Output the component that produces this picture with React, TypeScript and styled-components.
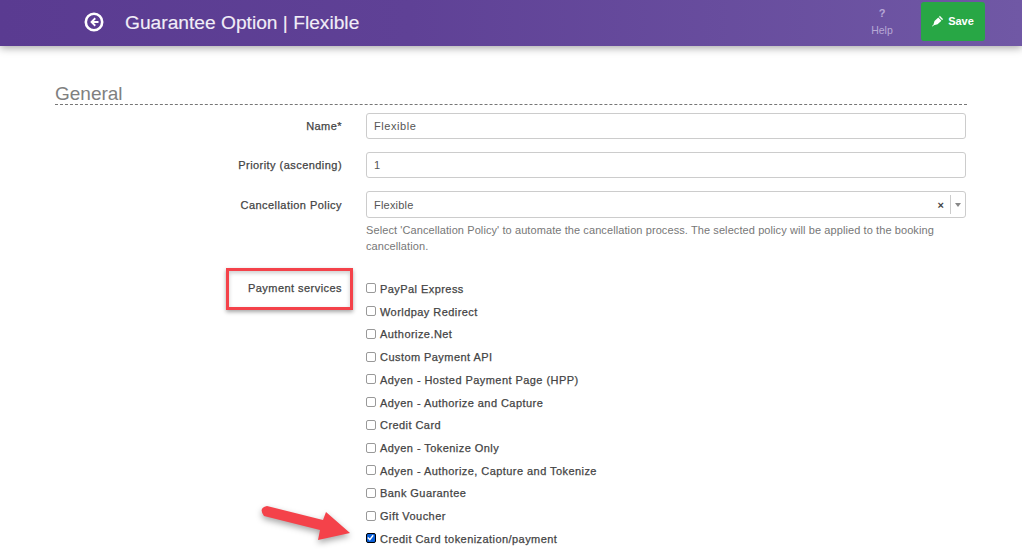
import React from "react";
import styled, { createGlobalStyle } from "styled-components";

const Global = createGlobalStyle`
  html, body { margin: 0; padding: 0; height: 559px; overflow: hidden; background: #fff; }
  body { font-family: "Liberation Sans", Arial, sans-serif; color: #333; }
  * { box-sizing: border-box; }
`;

const Page = styled.div`
  position: relative;
  width: 1022px;
  height: 559px;
  overflow: hidden;
`;

const Header = styled.header`
  height: 46px;
  display: flex;
  align-items: flex-start;
  padding-left: 84px;
  background: linear-gradient(90deg, #5a3b91 0%, #5f4196 40%, #7058a5 100%);
  box-shadow: 0 2px 8px rgba(0, 0, 0, 0.35);
`;

const BackIcon = styled.svg`
  width: 20px;
  height: 20px;
  margin-top: 12px;
  flex: none;
`;

const Title = styled.h1`
  margin: 11px 0 0 21px;
  font-size: 19.2px;
  line-height: 23px;
  font-weight: 400;
  color: #f1edf7;
  -webkit-text-stroke: 0.15px #f1edf7;
  flex: 1;
`;

const HelpBox = styled.div`
  width: 36px;
  margin: 7px 21px 0 0;
  display: flex;
  flex-direction: column;
  align-items: center;
  color: #b7a8d6;
`;

const HelpMark = styled.span`
  font-size: 11px;
  line-height: 13px;
  font-weight: 700;
`;

const HelpText = styled.span`
  font-size: 10.5px;
  line-height: 13px;
  margin-top: 4px;
`;

const SaveButton = styled.button`
  width: 64px;
  height: 39px;
  margin: 2px 37px 0 0;
  border: 0;
  border-radius: 3px;
  background: #28a745;
  color: #fff;
  font: 700 11px "Liberation Sans", Arial, sans-serif;
  display: flex;
  align-items: center;
  justify-content: center;
  gap: 4px;
  padding: 0 0 1px;
`;

const Content = styled.main`
  padding: 36px 55px 0;
`;

const SectionTitle = styled.h2`
  margin: 0 0 8px;
  height: 23px;
  font-size: 19px;
  line-height: 23px;
  font-weight: 400;
  color: #808080;
  border-bottom: 1px dashed #777;
`;

const Row = styled.div<{ $gap?: number }>`
  display: grid;
  grid-template-columns: 287px 600px;
  column-gap: 24px;
  margin-bottom: ${(p) => p.$gap ?? 13}px;
`;

const Label = styled.label<{ $top?: number }>`
  padding-top: ${(p) => p.$top ?? 7}px;
  text-align: right;
  font-size: 11px;
  line-height: 13px;
  font-weight: 400;
  letter-spacing: 0.45px;
  -webkit-text-stroke: 0.25px #444;
  color: #444;
`;

const Input = styled.input`
  width: 600px;
  height: 26px;
  padding: 0 7px;
  border: 1px solid #ccc;
  border-radius: 3px;
  font: 400 11px "Liberation Sans", Arial, sans-serif;
  letter-spacing: 0.55px;
  color: #555;
  background: #fff;
  outline: none;
`;

const SelectBox = styled.div`
  width: 600px;
  height: 27px;
  padding: 0 0 0 7px;
  border: 1px solid #ccc;
  border-radius: 3px;
  display: flex;
  align-items: center;
  font-size: 11px;
  letter-spacing: 0.2px;
  color: #555;
`;

const SelectValue = styled.span`
  flex: 1;
`;

const ClearMark = styled.span`
  font-size: 11px;
  font-weight: 700;
  color: #444;
  margin-right: 6px;
`;

const SelectDivider = styled.span`
  width: 1px;
  height: 19px;
  background: #ccc;
`;

const Caret = styled.span`
  width: 14px;
  display: flex;
  justify-content: center;
  &::after {
    content: "";
    border-left: 3px solid transparent;
    border-right: 3px solid transparent;
    border-top: 4px solid #888;
  }
`;

const Help = styled.p`
  margin: 4px 0 0;
  font-size: 11px;
  line-height: 16px;
  letter-spacing: 0.09px;
  color: #777;
`;

const Options = styled.div`
  margin-top: -2.4px;
  display: flex;
  flex-direction: column;
`;

const Option = styled.label`
  height: 22.72px;
  display: flex;
  align-items: center;
  gap: 4px;
  font-size: 11px;
  letter-spacing: 0.44px;
  -webkit-text-stroke: 0.25px #444;
  color: #444;
`;

const Check = styled.span<{ $on?: boolean }>`
  width: 10px;
  height: 10px;
  margin-top: -1px;
  flex: none;
  display: flex;
  border-radius: 2px;
  border: ${(p) => (p.$on ? "1.5px solid #000" : "1px solid #999")};
  background: ${(p) => (p.$on ? "#0b5fd8" : "#fff")};
`;

const RedBox = styled.div`
  position: absolute;
  left: 226px;
  top: 268px;
  width: 127px;
  height: 42px;
  border: 3px solid #f4424a;
  box-shadow: 0 2px 4px rgba(0, 0, 0, 0.35), inset 0 2px 4px rgba(0, 0, 0, 0.2);
`;

const Arrow = styled.svg`
  position: absolute;
  left: 258px;
  top: 500px;
  width: 100px;
  height: 50px;
  overflow: visible;
  filter: drop-shadow(0 3px 3px rgba(0, 0, 0, 0.35));
`;

const options = [
  "PayPal Express",
  "Worldpay Redirect",
  "Authorize.Net",
  "Custom Payment API",
  "Adyen - Hosted Payment Page (HPP)",
  "Adyen - Authorize and Capture",
  "Credit Card",
  "Adyen - Tokenize Only",
  "Adyen - Authorize, Capture and Tokenize",
  "Bank Guarantee",
  "Gift Voucher",
  "Credit Card tokenization/payment",
];

export default function App() {
  return (
    <Page>
      <Global />
      <Header>
        <BackIcon viewBox="0 0 20 20" aria-hidden="true">
          <circle cx="10" cy="10" r="8.2" fill="none" stroke="#fff" strokeWidth="2.6" />
          <path d="M10.6 5.6 6.2 10l4.4 4.4 1.3-1.3-2-2.1h4.6V9H9.9l2-2.1z" fill="#fff" />
        </BackIcon>
        <Title>Guarantee Option | Flexible</Title>
        <HelpBox>
          <HelpMark>?</HelpMark>
          <HelpText>Help</HelpText>
        </HelpBox>
        <SaveButton>
          <svg width="12" height="12" viewBox="0 0 12 12" aria-hidden="true">
            <path d="M7.8.8 11.2 4.2 10 5 7 2zM6.3 2.6 9.4 5.7 5.6 9.2 1.9 10.2.6 11.6 0 11l1.4-1.3L2.5 6z" fill="#fff" />
          </svg>
          Save
        </SaveButton>
      </Header>
      <Content>
        <SectionTitle>General</SectionTitle>
        <Row>
          <Label>Name*</Label>
          <Input defaultValue="Flexible" readOnly />
        </Row>
        <Row>
          <Label>Priority (ascending)</Label>
          <Input defaultValue="1" readOnly />
        </Row>
        <Row $gap={26}>
          <Label $top={8}>Cancellation Policy</Label>
          <div>
            <SelectBox>
              <SelectValue>Flexible</SelectValue>
              <ClearMark>×</ClearMark>
              <SelectDivider />
              <Caret />
            </SelectBox>
            <Help>
              Select 'Cancellation Policy' to automate the cancellation process. The selected policy will be applied to the booking cancellation.
            </Help>
          </div>
        </Row>
        <Row>
          <Label $top={2}>Payment services</Label>
          <Options>
            {options.map((o, i) => {
              const on = i === options.length - 1;
              return (
                <Option key={o}>
                  <Check $on={on}>
                    {on && (
                      <svg width="7" height="7" viewBox="0 0 7 7" aria-hidden="true">
                        <path d="M.8 3.6 2.8 5.6 6.2 1.2" fill="none" stroke="#fff" strokeWidth="1.4" />
                      </svg>
                    )}
                  </Check>
                  {o}
                </Option>
              );
            })}
          </Options>
        </Row>
      </Content>
      <RedBox />
      <Arrow viewBox="0 0 100 50" aria-hidden="true">
        <path d="M9 6 L65 20 L68 12 L92 33 L60 40 L62 30 L6 16 Q0 8 9 6 Z" fill="#f4424a" />
      </Arrow>
    </Page>
  );
}
